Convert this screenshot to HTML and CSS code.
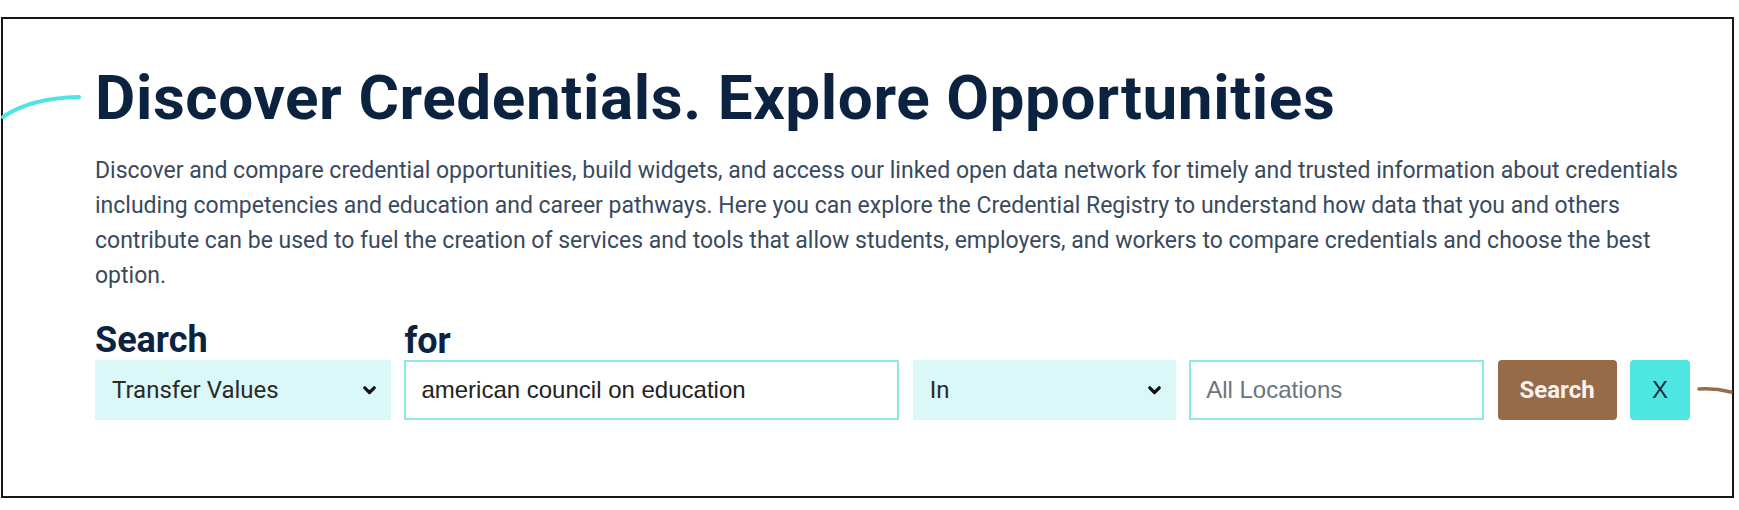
FILE: index.html
```html
<!DOCTYPE html>
<html lang="en">
<head>
<meta charset="utf-8">
<title>Discover Credentials</title>
<link rel="stylesheet" href="styles.css">
</head>
<body>
<div class="frame">
  <main class="hero">
    <h1 class="title">Discover Credentials. Explore Opportunities</h1>
    <p class="intro">Discover and compare credential opportunities, build widgets, and access our linked open data network for timely and trusted information about credentials including competencies and education and career pathways. Here you can explore the Credential Registry to understand how data that you and others contribute can be used to fuel the creation of services and tools that allow students, employers, and workers to compare credentials and choose the best option.</p>
    <form class="search">
      <div class="lbl lbl-search">Search</div>
      <div class="lbl lbl-for">for</div>
      <div class="ctl select">
        <span>Transfer Values</span>
        <svg class="chev" width="13" height="9" viewBox="0 0 13 9"><path d="M1.8 1.8 L6.5 6.5 L11.2 1.8" fill="none" stroke="#111" stroke-width="3.2" stroke-linecap="round" stroke-linejoin="round"/></svg>
      </div>
      <input class="ctl field" type="text" value="american council on education">
      <div class="ctl select">
        <span>In</span>
        <svg class="chev" width="13" height="9" viewBox="0 0 13 9"><path d="M1.8 1.8 L6.5 6.5 L11.2 1.8" fill="none" stroke="#111" stroke-width="3.2" stroke-linecap="round" stroke-linejoin="round"/></svg>
      </div>
      <input class="ctl field" type="text" placeholder="All Locations">
      <button class="ctl btn-search" type="button">Search</button>
      <button class="ctl btn-clear" type="button">X</button>
    </form>
  </main>
</div>
<svg class="deco" width="1739" height="510" viewBox="0 0 1739 510">
  <path d="M3 117 Q30 98 79 97" fill="none" stroke="#4fe3e1" stroke-width="4" stroke-linecap="round"/>
  <path d="M1699 389 Q1715 388 1731 392" fill="none" stroke="#9a6b45" stroke-width="3.5" stroke-linecap="round"/>
</svg>
</body>
</html>
```

FILE: styles.css
```css
html, body {
  margin: 0;
  background: #fff;
}

body {
  position: relative;
  width: 1739px;
  height: 510px;
  overflow: hidden;
}

.frame {
  margin: 17px 0 0 1px;
  width: 1733px;
  height: 481px;
  box-sizing: border-box;
  border: 2px solid #161616;
  padding: 43px 42px 0 92px;
}

.title {
  margin: 0;
  font: 700 62px/72px Roboto, "Liberation Sans", sans-serif;
  color: #0b2341;
  letter-spacing: 0.6px;
  white-space: nowrap;
}

.intro {
  margin: 19px 0 0;
  font: 400 23px/35px Roboto, "Liberation Sans", sans-serif;
  color: #3a4a5e;
}

.search {
  display: grid;
  grid-template-columns: 296px 495px 263px 295px 119px 60px;
  grid-template-rows: auto 60px;
  column-gap: 13.4px;
  margin: 27px 0 0;
}

.lbl {
  font: 700 36px/40px Roboto, "Liberation Sans", sans-serif;
  color: #0b2341;
  grid-row: 1;
}

.lbl-for {
  padding-top: 3px;
  line-height: 37px;
}

.ctl {
  grid-row: 2;
  box-sizing: border-box;
  height: 60px;
  margin: 0;
}

.select {
  display: flex;
  align-items: center;
  justify-content: space-between;
  padding: 0 15px 0 17px;
  background: #daf8f8;
  font: 400 24px Roboto, "Liberation Sans", sans-serif;
  color: #2a2a2a;
}

.chev {
  display: block;
}

.field {
  border: 2px solid #8de9e6;
  background: #fff;
  padding: 0 15px;
  font: 400 24px "Liberation Sans", Arial, sans-serif;
  color: #222;
  outline: none;
}

.field::placeholder {
  color: #6c757d;
}

.btn-search {
  border: 0;
  border-radius: 4px;
  background: #976b47;
  color: #f8f3ee;
  font: 700 24px Roboto, "Liberation Sans", sans-serif;
  padding: 0;
}

.btn-clear {
  border: 0;
  border-radius: 4px;
  background: #4ee6e1;
  color: #1a2b47;
  font: 400 24px "Liberation Sans", Arial, sans-serif;
  padding: 0;
}

.deco {
  position: absolute;
  left: 0;
  top: 0;
  pointer-events: none;
}
```
